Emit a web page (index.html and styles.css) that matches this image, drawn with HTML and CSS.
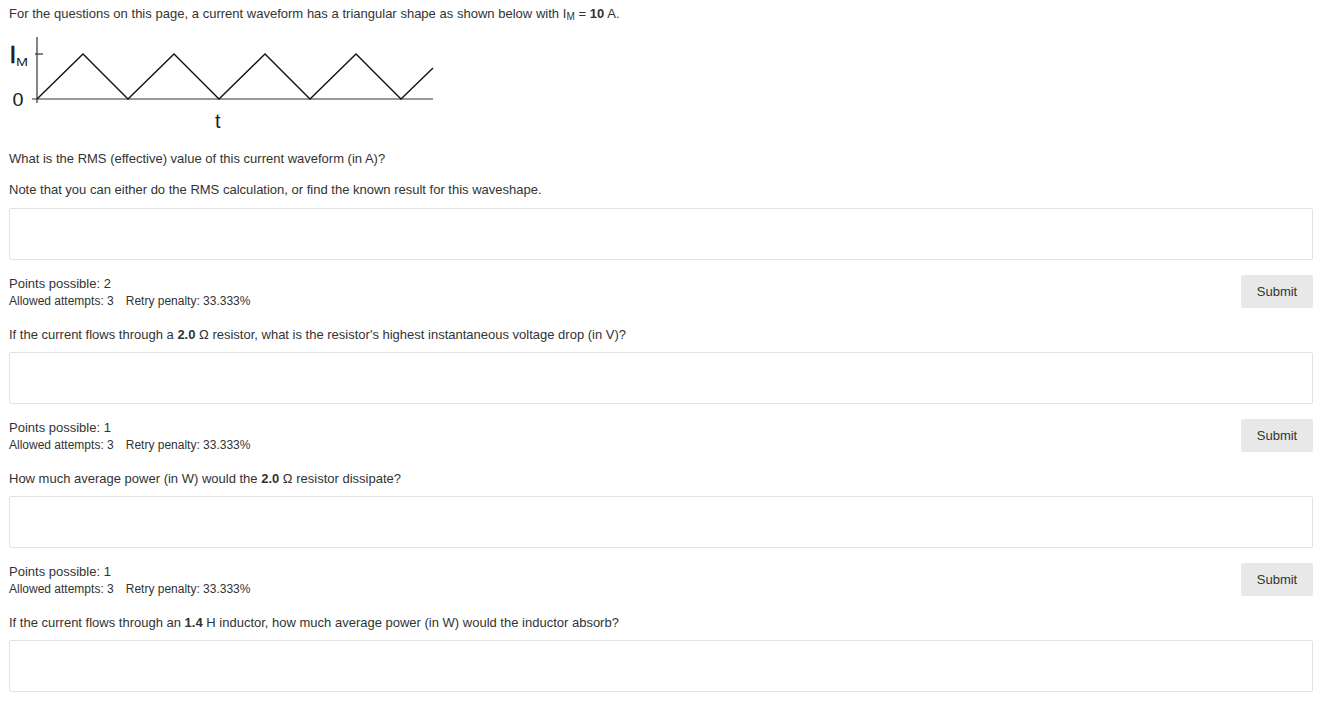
FILE: index.html
```html
<!DOCTYPE html>
<html>
<head>
<meta charset="utf-8">
<link rel="stylesheet" href="styles.css">
</head>
<body>
<div class="page">
  <p class="intro">For the questions on this page, a current waveform has a triangular shape as shown below with I<sub>M</sub> = <b>10</b> A.</p>
  <svg class="figure" width="430" height="105" viewBox="0 0 430 105">
    <text x="0.5" y="33" class="lbl-i">I</text>
    <text x="7" y="36" class="lbl-sub" textLength="12" lengthAdjust="spacingAndGlyphs">M</text>
    <text x="3.5" y="76" class="lbl-0" textLength="11" lengthAdjust="spacingAndGlyphs">0</text>
    <text x="206" y="98" class="lbl-t">t</text>
    <line x1="28" y1="7" x2="28" y2="73" class="axis"/>
    <line x1="26" y1="24" x2="34" y2="24" class="axis"/>
    <line x1="23" y1="69" x2="424" y2="69" class="axis"/>
    <polyline class="wave" points="28,69 74,24 119,69 165,24 210,69 256,24 301,69 347,24 392,69 424,38"/>
  </svg>

  <section class="question">
    <p class="prompt">What is the RMS (effective) value of this current waveform (in A)?</p>
    <p class="prompt note">Note that you can either do the RMS calculation, or find the known result for this waveshape.</p>
    <div class="answer"></div>
    <div class="meta">
      <div class="info">
        <div class="points">Points possible: 2</div>
        <div class="attempts"><span class="att">Allowed attempts: 3</span><span>Retry penalty: 33.333%</span></div>
      </div>
      <button class="submit">Submit</button>
    </div>
  </section>

  <section class="question">
    <p class="prompt">If the current flows through a <b>2.0</b> Ω resistor, what is the resistor's highest instantaneous voltage drop (in V)?</p>
    <div class="answer"></div>
    <div class="meta">
      <div class="info">
        <div class="points">Points possible: 1</div>
        <div class="attempts"><span class="att">Allowed attempts: 3</span><span>Retry penalty: 33.333%</span></div>
      </div>
      <button class="submit">Submit</button>
    </div>
  </section>

  <section class="question">
    <p class="prompt">How much average power (in W) would the <b>2.0</b> Ω resistor dissipate?</p>
    <div class="answer"></div>
    <div class="meta">
      <div class="info">
        <div class="points">Points possible: 1</div>
        <div class="attempts"><span class="att">Allowed attempts: 3</span><span>Retry penalty: 33.333%</span></div>
      </div>
      <button class="submit">Submit</button>
    </div>
  </section>

  <section class="question">
    <p class="prompt">If the current flows through an <b>1.4</b> H inductor, how much average power (in W) would the inductor absorb?</p>
    <div class="answer"></div>
  </section>
</div>
</body>
</html>
```

FILE: styles.css
```css
html, body {
  margin: 0;
  padding: 0;
  background: #fff;
}
body {
  font-family: "Liberation Sans", Arial, sans-serif;
  font-size: 13px;
  color: #333;
}
.page {
  padding: 0 10px 0 9px;
}
p {
  margin: 0;
}
.intro {
  margin-top: 5px;
  line-height: 18px;
  word-spacing: 0.1px;
}
.intro sub {
  font-size: 10px;
  vertical-align: -2px;
  line-height: 0;
}
.figure {
  display: block;
  margin-top: 7px;
  overflow: visible;
}
.figure .axis {
  stroke: #333;
  stroke-width: 1.2;
}
.figure .wave {
  fill: none;
  stroke: #111;
  stroke-width: 1.4;
}
.figure text {
  font-family: "Liberation Sans", Arial, sans-serif;
  fill: #1a1a1a;
}
.figure .lbl-i {
  font-size: 24px;
  stroke: #1a1a1a;
  stroke-width: 0.6;
}
.figure .lbl-sub {
  font-size: 11px;
}
.figure .lbl-0 {
  font-size: 18px;
}
.figure .lbl-t {
  font-size: 20px;
}
.question .prompt {
  margin-top: 15px;
  line-height: 18px;
}
.question + .question .prompt {
  margin-top: 17px;
}
.question .note {
  margin-top: 13px;
}
.answer {
  margin-top: 8px;
  height: 50px;
  border: 1px solid #e2e2e2;
  border-radius: 2px;
}
.note + .answer {
  margin-top: 9px;
}
.meta {
  margin-top: 15px;
  display: flex;
  justify-content: space-between;
  align-items: flex-start;
}
.points {
  line-height: 18px;
}
.attempts {
  font-size: 12px;
  line-height: 16px;
}
.att {
  margin-right: 12px;
}
.submit {
  width: 72px;
  height: 33px;
  border: none;
  border-radius: 2px;
  background: #e8e8e8;
  color: #333;
  font-family: "Liberation Sans", Arial, sans-serif;
  font-size: 13px;
  padding: 0;
}
```
